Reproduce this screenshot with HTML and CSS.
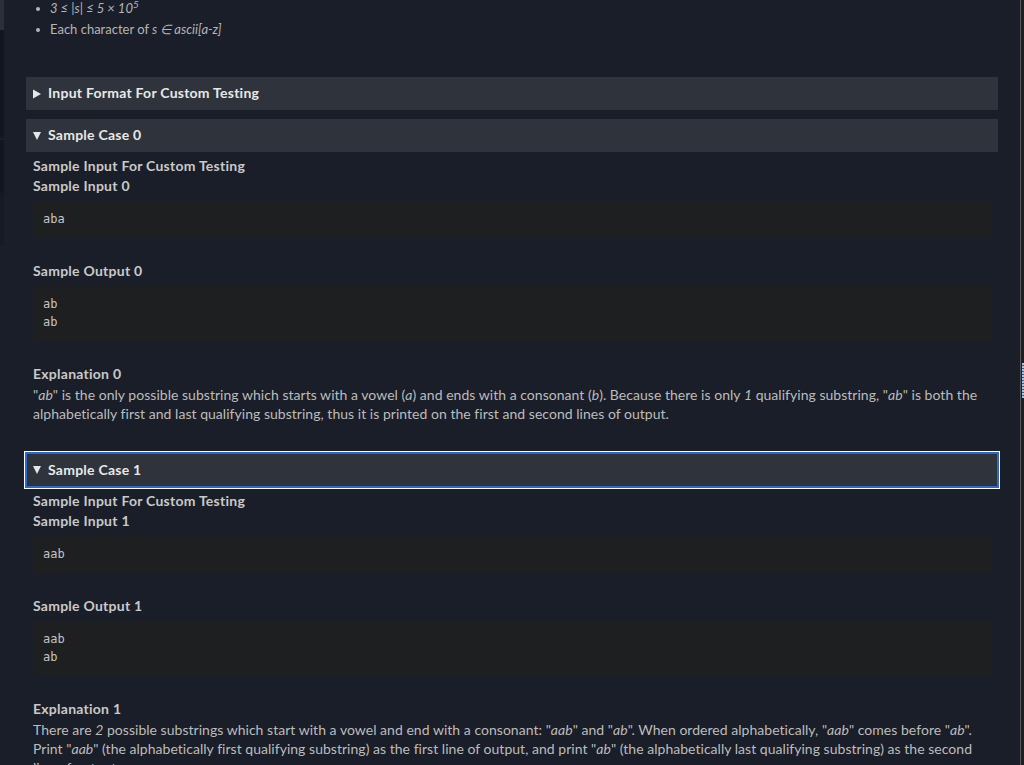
FILE: index.html
```html
<!DOCTYPE html>
<html lang="en">
<head>
<meta charset="utf-8">
<title>Sample Cases</title>
<link rel="stylesheet" href="styles.css">
</head>
<body>
<div class="app">
  <div class="gutter">
    <span class="seg seg-a"></span>
    <span class="seg seg-b"></span>
    <span class="seg seg-c"></span>
    <span class="seg seg-d"></span>
  </div>
  <main class="content">
    <ul class="constraints">
      <li><span class="dot"></span><span class="math">3 ≤ |s| ≤ 5 × 10<sup>5</sup></span></li>
      <li><span class="dot"></span><span>Each character of <span class="math">s ∈ ascii[a-z]</span></span></li>
    </ul>

    <section class="case">
      <div class="case-head">
        <svg class="tri" width="8" height="10" viewBox="0 0 8 10"><path d="M0 0.5 L8 5 L0 9.5 Z" fill="#e6e6e6"/></svg>
        <span>Input Format For Custom Testing</span>
      </div>
    </section>

    <section class="case">
      <div class="case-head">
        <svg class="tri" width="8" height="10" viewBox="0 0 8 10"><path d="M0 1 L8 1 L4 9 Z" fill="#e6e6e6"/></svg>
        <span>Sample Case 0</span>
      </div>
      <div class="case-body">
        <div class="label">Sample Input For Custom Testing</div>
        <div class="label">Sample Input 0</div>
        <pre class="code">aba</pre>
        <div class="label spaced">Sample Output 0</div>
        <pre class="code">ab
ab</pre>
        <div class="label spaced">Explanation 0</div>
        <p class="para">"<i>ab</i>" is the only possible substring which starts with a vowel (<i>a</i>) and ends with a consonant (<i>b</i>). Because there is only <i>1</i> qualifying substring, "<i>ab</i>" is both the alphabetically first and last qualifying substring, thus it is printed on the first and second lines of output.</p>
      </div>
    </section>

    <section class="case case-gap">
      <div class="case-head focused">
        <svg class="tri" width="8" height="10" viewBox="0 0 8 10"><path d="M0 1 L8 1 L4 9 Z" fill="#e6e6e6"/></svg>
        <span>Sample Case 1</span>
      </div>
      <div class="case-body">
        <div class="label">Sample Input For Custom Testing</div>
        <div class="label">Sample Input 1</div>
        <pre class="code">aab</pre>
        <div class="label spaced">Sample Output 1</div>
        <pre class="code">aab
ab</pre>
        <div class="label spaced">Explanation 1</div>
        <p class="para">There are <i>2</i> possible substrings which start with a vowel and end with a consonant: "<i>aab</i>" and "<i>ab</i>". When ordered alphabetically, "<i>aab</i>" comes before "<i>ab</i>". Print "<i>aab</i>" (the alphabetically first qualifying substring) as the first line of output, and print "<i>ab</i>" (the alphabetically last qualifying substring) as the second line of output.</p>
      </div>
    </section>
  </main>
  <div class="divider"></div>
  <div class="scroll"><span class="thumb"></span></div>
</div>
</body>
</html>
```
FILE: styles.css
```css
* { box-sizing: border-box; }
html, body {
  margin: 0;
  padding: 0;
  background: #1a1e28;
}
body {
  font-family: Lato, "Open Sans", "Liberation Sans", sans-serif;
  color: #bdbdbd;
  font-size: 14px;
}
.app {
  display: flex;
  width: 1024px;
  height: 765px;
  overflow: hidden;
}
.gutter {
  width: 4px;
  flex: none;
  display: flex;
  flex-direction: column;
}
.seg { display: block; width: 4px; }
.seg-a { height: 30px; background: #2b2f38; }
.seg-b { height: 108px; background: #121621; margin-bottom: 2px; }
.seg-c { height: 53px; background: #121621; }
.seg-d { height: 52px; background: #161a24; }

.content {
  flex: 1;
  padding: 0 22px;
  min-width: 0;
}
.divider {
  width: 1px;
  flex: none;
  background: #5d5850;
}
.scroll {
  width: 3px;
  flex: none;
  display: flex;
  flex-direction: column;
  padding-top: 363px;
}
.thumb {
  display: block;
  width: 2px;
  height: 35px;
  margin-left: 1px;
  background: repeating-linear-gradient(to bottom, #a9c3e6 0 2px, #3c5a86 2px 3px);
}

.constraints {
  list-style: none;
  margin: -2px 0 0;
  padding: 0 0 0 10px;
}
.constraints li {
  display: flex;
  align-items: center;
  gap: 10px;
  line-height: 21px;
  font-size: 13px;
  color: #b5b5b5;
}
.dot {
  width: 4px;
  height: 4px;
  border-radius: 50%;
  background: #b5b5b5;
  flex: none;
}
.math { font-style: italic; }
.math sup { font-size: 10px; line-height: 0; }

.case { margin-top: 9px; }
.constraints + .case { margin-top: 37px; }
.case-gap { margin-top: 30px; }
.case-head {
  display: flex;
  align-items: center;
  gap: 7px;
  height: 33px;
  padding: 0 0 2px 7px;
  background: #2f343c;
  color: #e8e8e8;
  font-weight: 700;
  font-size: 14px;
  letter-spacing: 0.25px;
}
.case-head.focused {
  height: 34px;
  outline: 2px solid #2c67d0;
  outline-offset: -1px;
  box-shadow: 0 0 0 2px #ffffff;
}
.tri { flex: none; margin-top: 2px; }
.case-body {
  padding: 4px 6px 0 7px;
}
.label {
  font-weight: 700;
  font-size: 14px;
  line-height: 20px;
  letter-spacing: 0.25px;
  color: #c9c9c9;
}
.label.spaced { margin-top: 23px; }
.code {
  margin: 5px 0 0;
  padding: 9px 10px 10px;
  background: #1e1f21;
  font-family: "DejaVu Sans Mono", "Liberation Mono", monospace;
  font-size: 12px;
  line-height: 18px;
  color: #c4c4c4;
}
.para {
  margin: 1px 0 0;
  line-height: 19px;
  font-size: 14px;
  letter-spacing: 0.03px;
  color: #bcbcbc;
}
.para i { font-style: italic; }
```
